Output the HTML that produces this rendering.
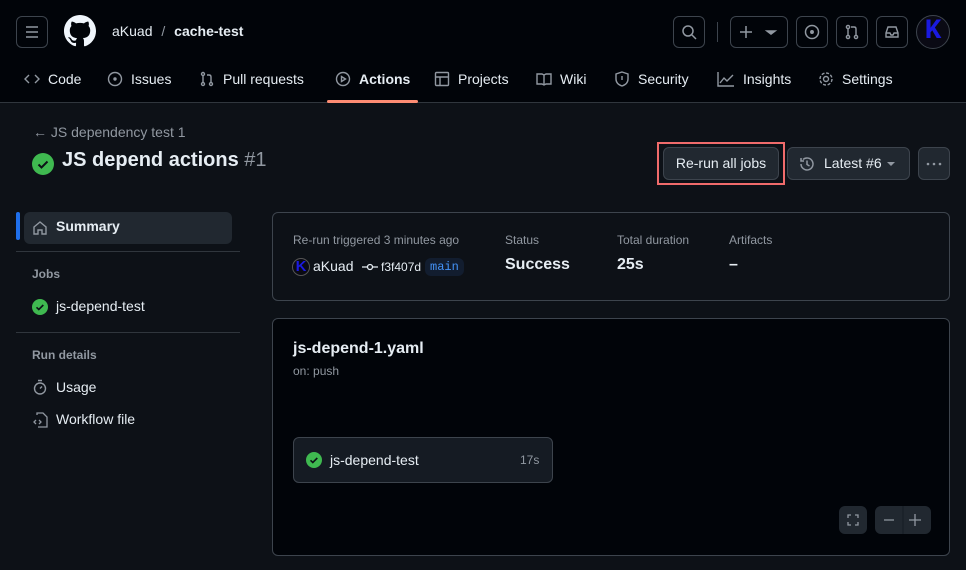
<!DOCTYPE html><html><head><meta charset="utf-8"><style>
*{box-sizing:border-box;margin:0;padding:0}
body{width:966px;height:570px;background:#0d1117;font-family:"Liberation Sans",sans-serif;color:#e6edf3;position:relative;overflow:hidden;font-size:14px}
.a{position:absolute}
.hdr{left:0;top:0;width:966px;height:103px;background:#010409;border-bottom:1px solid #30363d}
.btn{position:absolute;border:1px solid #3d444d;border-radius:6px;height:32px;top:16px}
.btn svg{display:block}
.tab{position:absolute;top:71px;font-size:14px;color:#e6edf3;display:flex;align-items:center;gap:8px}
.tab svg{stroke:#9198a1;fill:none;stroke-width:1.4}
.gray{color:#9198a1}
.chk{position:absolute;border-radius:50%;background:#3fb950}
.chk svg{display:block}
.card{border:1px solid #3d444d;border-radius:6px}
</style></head><body>
<div class="a hdr">
<div class="btn" style="left:16px;width:32px"><svg width="30" height="30" viewBox="0 0 30 30" stroke="#9198a1" stroke-width="1.5"><path d="M9 10h12M9 15h12M9 20h12"/></svg></div>
<svg class="a" style="left:64px;top:15px" width="32" height="32" viewBox="0 0 16 16"><path fill="#f0f6fc" d="M8 0C3.58 0 0 3.58 0 8c0 3.540 2.290 6.530 5.470 7.590.4.07.55-.17.55-.38v-1.33c-2.230.48-2.700-1.070-2.700-1.070-.36-.92-.89-1.170-.89-1.170-.73-.5.05-.49.05-.49.8.06 1.230.83 1.230.83.71 1.230 1.870.87 2.330.67.07-.52.28-.87.51-1.070-1.780-.2-3.650-.89-3.650-3.950 0-.87.31-1.590.82-2.150-.08-.2-.36-1.020.08-2.120 0 0 .67-.21 2.200.82a7.600 7.600 0 0 1 4 0c1.530-1.040 2.200-.82 2.200-.82.44 1.100.16 1.920.08 2.120.51.56.82 1.270.82 2.150 0 3.070-1.870 3.750-3.650 3.950.29.25.54.73.54 1.480v2.200c0 .21.15.46.55.38A8.010 8.010 0 0 0 16 8c0-4.420-3.580-8-8-8z"/></svg>
<div class="a" style="left:112px;top:23px;font-size:14px">aKuad <span class="gray" style="margin:0 5px">/</span> <b>cache-test</b></div>
<div class="btn" style="left:673px;width:32px"><svg width="30" height="30" stroke="#9198a1" stroke-width="1.5" fill="none"><circle cx="14" cy="14" r="5"/><path d="M18 18l4 4"/></svg></div>
<div class="a" style="left:717px;top:22px;width:1px;height:20px;background:#3d444d"></div>
<div class="btn" style="left:730px;width:58px"><svg width="56" height="30" stroke="#9198a1" stroke-width="1.5" fill="none"><path d="M15 9v12M9 15h12"/><path d="M36 14l4 3 4-3z" fill="#9198a1"/></svg></div>
<div class="btn" style="left:796px;width:32px"><svg width="30" height="30" stroke="#9198a1" stroke-width="1.5" fill="none"><circle cx="15" cy="15" r="6.5"/><circle cx="15" cy="15" r="1.2" fill="#9198a1"/></svg></div>
<div class="btn" style="left:836px;width:32px"><svg width="30" height="30" stroke="#9198a1" stroke-width="1.4" fill="none"><circle cx="11" cy="10" r="1.6"/><circle cx="11" cy="20" r="1.6"/><circle cx="19" cy="20" r="1.6"/><path d="M11 12v6M19 18v-6q0-2-2-2h-3"/></svg></div>
<div class="btn" style="left:876px;width:32px"><svg width="30" height="30" stroke="#9198a1" stroke-width="1.4" fill="none"><path d="M9 16l2-6h8l2 6v4H9z M9 16h4l1 2h2l1-2h4"/></svg></div>
<div class="a" style="left:916px;top:15px;width:34px;height:34px;border-radius:50%;background:#0a0a14;border:1px solid #3d444d;color:#1a1ae0;font-weight:bold;font-size:28px;text-align:center;line-height:32px;font-family:'Liberation Mono',monospace">K</div>
<div class="tab" style="left:24px"><svg width="16" height="16"><path d="M5 4L1 8l4 4M11 4l4 4-4 4"/></svg>Code</div>
<div class="tab" style="left:107px"><svg width="16" height="16"><circle cx="8" cy="8" r="6.5"/><circle cx="8" cy="8" r="1" fill="#9198a1"/></svg>Issues</div>
<div class="tab" style="left:199px"><svg width="16" height="16"><circle cx="4" cy="3" r="1.5"/><circle cx="4" cy="13" r="1.5"/><circle cx="12" cy="13" r="1.5"/><path d="M4 5v6M12 11V6q0-2-2-2H8"/></svg>Pull requests</div>
<div class="tab" style="left:335px;font-weight:bold"><svg width="16" height="16"><circle cx="8" cy="8" r="6.5"/><path d="M6.5 5.5v5l4-2.5z"/></svg>Actions</div>
<div class="a" style="left:327px;top:100px;width:91px;height:3px;background:#fd8c73;border-radius:2px"></div>
<div class="tab" style="left:434px"><svg width="16" height="16"><rect x="1.5" y="1.5" width="13" height="13" rx="1"/><path d="M1.5 6h13M6 6v8.5"/></svg>Projects</div>
<div class="tab" style="left:536px"><svg width="16" height="16"><path d="M1 3h5l2 1 2-1h5v10h-5l-2 1-2-1H1zM8 4v10"/></svg>Wiki</div>
<div class="tab" style="left:614px"><svg width="16" height="16"><path d="M8 1l6 2v5c0 4-3 6-6 7-3-1-6-3-6-7V3z M8 5v4"/></svg>Security</div>
<div class="tab" style="left:717px"><svg width="18" height="16"><path d="M1 1v14h16M3 12l4-5 3 3 6-6"/></svg>Insights</div>
<div class="tab" style="left:818px"><svg width="16" height="16"><circle cx="8" cy="8" r="2.5"/><circle cx="8" cy="8" r="6" stroke-dasharray="3 1.7"/></svg>Settings</div>
</div>

<div class="a gray" style="left:33px;top:124px;font-size:14px">← JS dependency test 1</div>
<div class="chk" style="left:32px;top:153px;width:22px;height:22px"><svg width="22" height="22" stroke="#0d1117" stroke-width="2" fill="none"><path d="M6.5 11.5l3 3 6-6"/></svg></div>
<div class="a" style="left:62px;top:149px;font-size:20px;font-weight:bold">JS depend actions <span class="gray" style="font-weight:normal">#1</span></div>

<div class="a" style="left:657px;top:142px;width:128px;height:43px;border:2px solid #f06b6b"></div>
<div class="a" style="left:663px;top:147px;width:116px;height:33px;background:#212830;border:1px solid #3d444d;border-radius:6px;text-align:center;line-height:31px;font-size:14px">Re-run all jobs</div>
<div class="a" style="left:787px;top:147px;width:123px;height:33px;background:#212830;border:1px solid #3d444d;border-radius:6px;font-size:14px;line-height:31px;padding-left:36px">Latest #6
<svg class="a" style="left:10px;top:7px" width="18" height="18" stroke="#9198a1" stroke-width="1.5" fill="none"><path d="M3 9a6 6 0 1 0 2-4.5M3 3v3h3M9 5.5v4l2.5 1.5"/></svg>
<svg class="a" style="left:98px;top:13px" width="10" height="6"><path d="M1 1l4 4 4-4z" fill="#9198a1"/></svg></div>
<div class="a" style="left:918px;top:147px;width:32px;height:33px;background:#212830;border:1px solid #3d444d;border-radius:6px"><svg width="30" height="31" fill="#9198a1"><circle cx="9" cy="16" r="1.3"/><circle cx="15" cy="16" r="1.3"/><circle cx="21" cy="16" r="1.3"/></svg></div>

<div class="a" style="left:16px;top:212px;width:4px;height:28px;background:#1f6feb;border-radius:2px"></div>
<div class="a" style="left:24px;top:212px;width:208px;height:32px;background:#212830;border-radius:6px"></div>
<svg class="a" style="left:32px;top:220px" width="16" height="16" stroke="#9198a1" stroke-width="1.4" fill="none"><path d="M2 7l6-5 6 5v7H10v-4H6v4H2z"/></svg>
<div class="a" style="left:56px;top:218px;font-weight:bold">Summary</div>
<div class="a" style="left:16px;top:251px;width:224px;height:1px;background:#30363d"></div>
<div class="a gray" style="left:32px;top:267px;font-size:12px;font-weight:bold">Jobs</div>
<div class="chk" style="left:32px;top:299px;width:16px;height:16px"><svg width="16" height="16" stroke="#0d1117" stroke-width="1.6" fill="none"><path d="M4.5 8.3l2.3 2.2 4.5-4.5"/></svg></div>
<div class="a" style="left:56px;top:298px">js-depend-test</div>
<div class="a" style="left:16px;top:332px;width:224px;height:1px;background:#30363d"></div>
<div class="a gray" style="left:32px;top:348px;font-size:12px;font-weight:bold">Run details</div>
<svg class="a" style="left:32px;top:379px" width="16" height="16" stroke="#9198a1" stroke-width="1.4" fill="none"><circle cx="8" cy="9.5" r="5.5"/><path d="M6 1.5h4M8 9.5l2-2"/></svg>
<div class="a" style="left:56px;top:379px">Usage</div>
<svg class="a" style="left:32px;top:411px" width="16" height="18" stroke="#9198a1" stroke-width="1.3" fill="none"><path d="M5 4V2h6l4 4v10H6M4 9l-2 2 2 2M7 9l2 2-2 2"/></svg>
<div class="a" style="left:56px;top:411px">Workflow file</div>

<div class="a card" style="left:272px;top:212px;width:678px;height:89px"></div>
<div class="a gray" style="left:293px;top:233px;font-size:12px">Re-run triggered 3 minutes ago</div>
<div class="a" style="left:292px;top:258px;width:18px;height:18px;border-radius:50%;background:#0a0a14;border:1px solid #555;color:#1a1ae0;font-weight:bold;font-size:15px;text-align:center;line-height:16px">K</div>
<div class="a" style="left:313px;top:258px;font-size:14px">aKuad</div>
<svg class="a" style="left:362px;top:262px" width="16" height="10" stroke="#e6edf3" stroke-width="1.3" fill="none"><circle cx="8" cy="5" r="2.5"/><path d="M0 5h5.5M10.5 5H16"/></svg>
<div class="a" style="left:381px;top:260px;font-size:12px">f3f407d</div>
<div class="a" style="left:425px;top:258px;height:18px;padding:0 5px;background:#121d2f;border-radius:6px;color:#4493f8;font-family:'Liberation Mono',monospace;font-size:12px;line-height:18px">main</div>
<div class="a gray" style="left:505px;top:233px;font-size:12px">Status</div>
<div class="a" style="left:505px;top:256px;font-size:16px;font-weight:bold">Success</div>
<div class="a gray" style="left:617px;top:233px;font-size:12px">Total duration</div>
<div class="a" style="left:617px;top:256px;font-size:16px;font-weight:bold">25s</div>
<div class="a gray" style="left:729px;top:233px;font-size:12px">Artifacts</div>
<div class="a" style="left:729px;top:256px;font-size:16px;font-weight:bold">–</div>

<div class="a card" style="left:272px;top:318px;width:678px;height:238px;background:#010409"></div>
<div class="a" style="left:293px;top:340px;font-size:16px;font-weight:bold">js-depend-1.yaml</div>
<div class="a gray" style="left:293px;top:364px;font-size:12px">on: push</div>
<div class="a" style="left:293px;top:437px;width:260px;height:46px;background:#151b23;border:1px solid #3d444d;border-radius:6px"></div>
<div class="chk" style="left:306px;top:452px;width:16px;height:16px"><svg width="16" height="16" stroke="#0d1117" stroke-width="1.6" fill="none"><path d="M4.5 8.3l2.3 2.2 4.5-4.5"/></svg></div>
<div class="a" style="left:330px;top:452px;font-size:14px">js-depend-test</div>
<div class="a gray" style="left:520px;top:453px;font-size:12px">17s</div>
<div class="a" style="left:839px;top:506px;width:28px;height:28px;background:#212830;border-radius:6px"><svg width="28" height="28" stroke="#9198a1" stroke-width="1.3" fill="none"><path d="M9 12V9h3M16 9h3v3M19 16v3h-3M12 19H9v-3"/></svg></div>
<div class="a" style="left:875px;top:506px;width:56px;height:28px;background:#212830;border-radius:6px"><svg width="56" height="28" fill="none"><path d="M28 0v28" stroke="#151b23" stroke-width="1"/><path d="M9 14h10M34 14h12M40 8v12" stroke="#9198a1" stroke-width="1.3"/></svg></div>
</body></html>
